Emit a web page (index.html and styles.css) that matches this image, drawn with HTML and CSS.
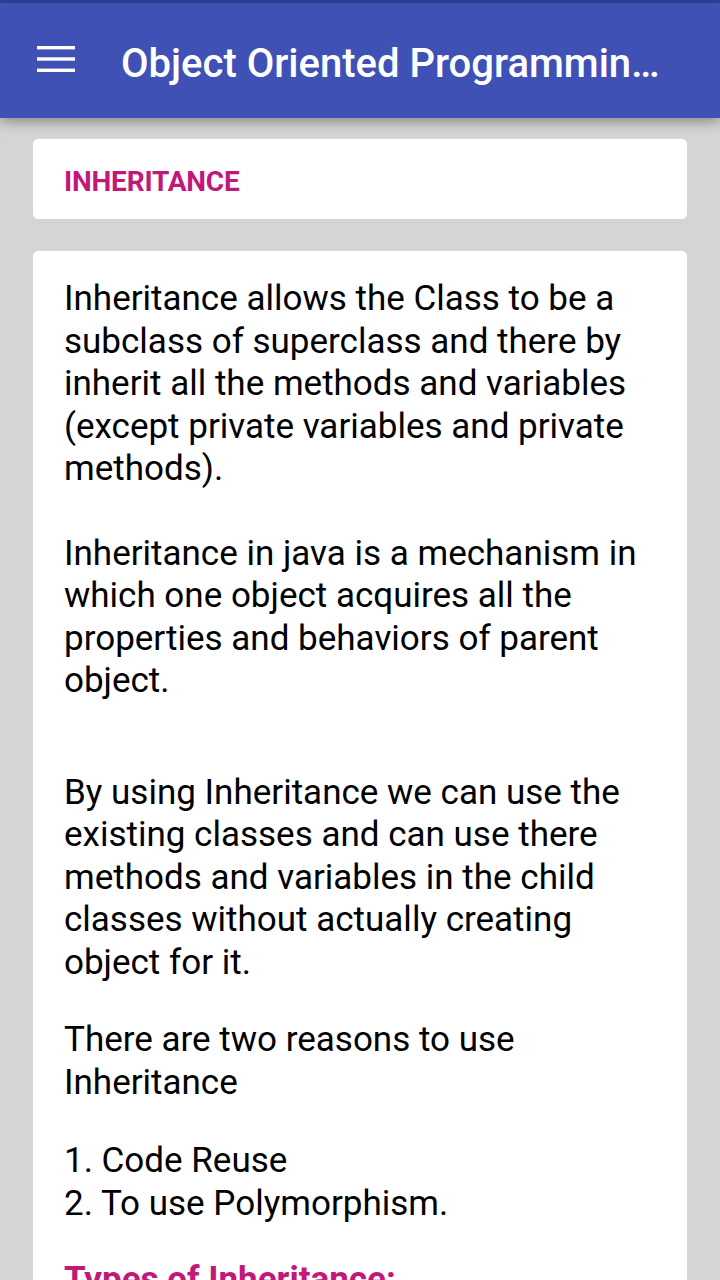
FILE: index.html
```html
<!DOCTYPE html>
<html>
<head>
<meta charset="utf-8">
<link rel="stylesheet" href="styles.css">
</head>
<body>
<div class="status"></div>
<header class="appbar">
  <svg class="menu" width="38" height="28" viewBox="0 0 38 28"><rect x="0" y="1" width="38" height="3.4" fill="#fff"/><rect x="0" y="12.3" width="38" height="3.4" fill="#fff"/><rect x="0" y="23.6" width="38" height="3.4" fill="#fff"/></svg>
  <div class="title">Object Oriented Programming in Java</div>
</header>
<main class="content">
  <section class="card head-card">
    <div class="topic">INHERITANCE</div>
  </section>
  <section class="card body-card">
    <p class="p1">Inheritance allows the Class to be a subclass of superclass and there by inherit all the methods and variables (except private variables and private methods).</p>
    <p class="p2">Inheritance in java is a mechanism in which one object acquires all the properties and behaviors of parent object.</p>
    <p class="p3">By using Inheritance we can use the existing classes and can use there methods and variables in the child classes without actually creating object for it.</p>
    <p class="p4">There are two reasons to use Inheritance</p>
    <p class="p5">1. Code Reuse<br>2. To use Polymorphism.</p>
    <h2 class="sub">Types of Inheritance:</h2>
  </section>
</main>
</body>
</html>
```
FILE: styles.css
```css
html, body { margin: 0; padding: 0; }
body {
  width: 720px;
  height: 1280px;
  overflow: hidden;
  background: #d5d5d5;
  font-family: Roboto, "Noto Sans", sans-serif;
  color: #000;
}
.status { height: 3px; background: #303f9f; }
.appbar {
  height: 115px;
  background: #3f51b5;
  display: flex;
  align-items: center;
  padding-left: 37px;
  box-shadow: 0 4px 12px rgba(0,0,0,0.35);
  position: relative;
  z-index: 1;
}
.menu { flex: none; margin-top: -4px; }
.title {
  margin-left: 46px;
  color: #fff;
  font-size: 40px;
  font-weight: 500;
  white-space: nowrap;
  overflow: hidden;
  text-overflow: ellipsis;
  width: 540px;
  margin-top: 5px;
}
.content { padding: 21px 33px 0; }
.card { background: #fff; border-radius: 5px; }
.head-card { height: 80px; display: flex; align-items: center; padding-left: 31px; margin-bottom: 32px; }
.topic { color: #c2187a; font-weight: 700; font-size: 28px; letter-spacing: -0.2px; margin-top: 4px; }
.body-card { padding: 27px 38px 20px 31px; }
.body-card p { margin: 0; font-size: 35px; line-height: 42.5px; }
.p1 { margin-bottom: 42px !important; }
.p2 { margin-bottom: 69px !important; }
.p3 { margin-bottom: 35px !important; }
.p4 { margin-bottom: 36px !important; }
.p5 { margin-bottom: 34px !important; }
.sub { margin: 0; color: #c2187a; font-weight: 700; font-size: 35px; line-height: 42px; }
```
